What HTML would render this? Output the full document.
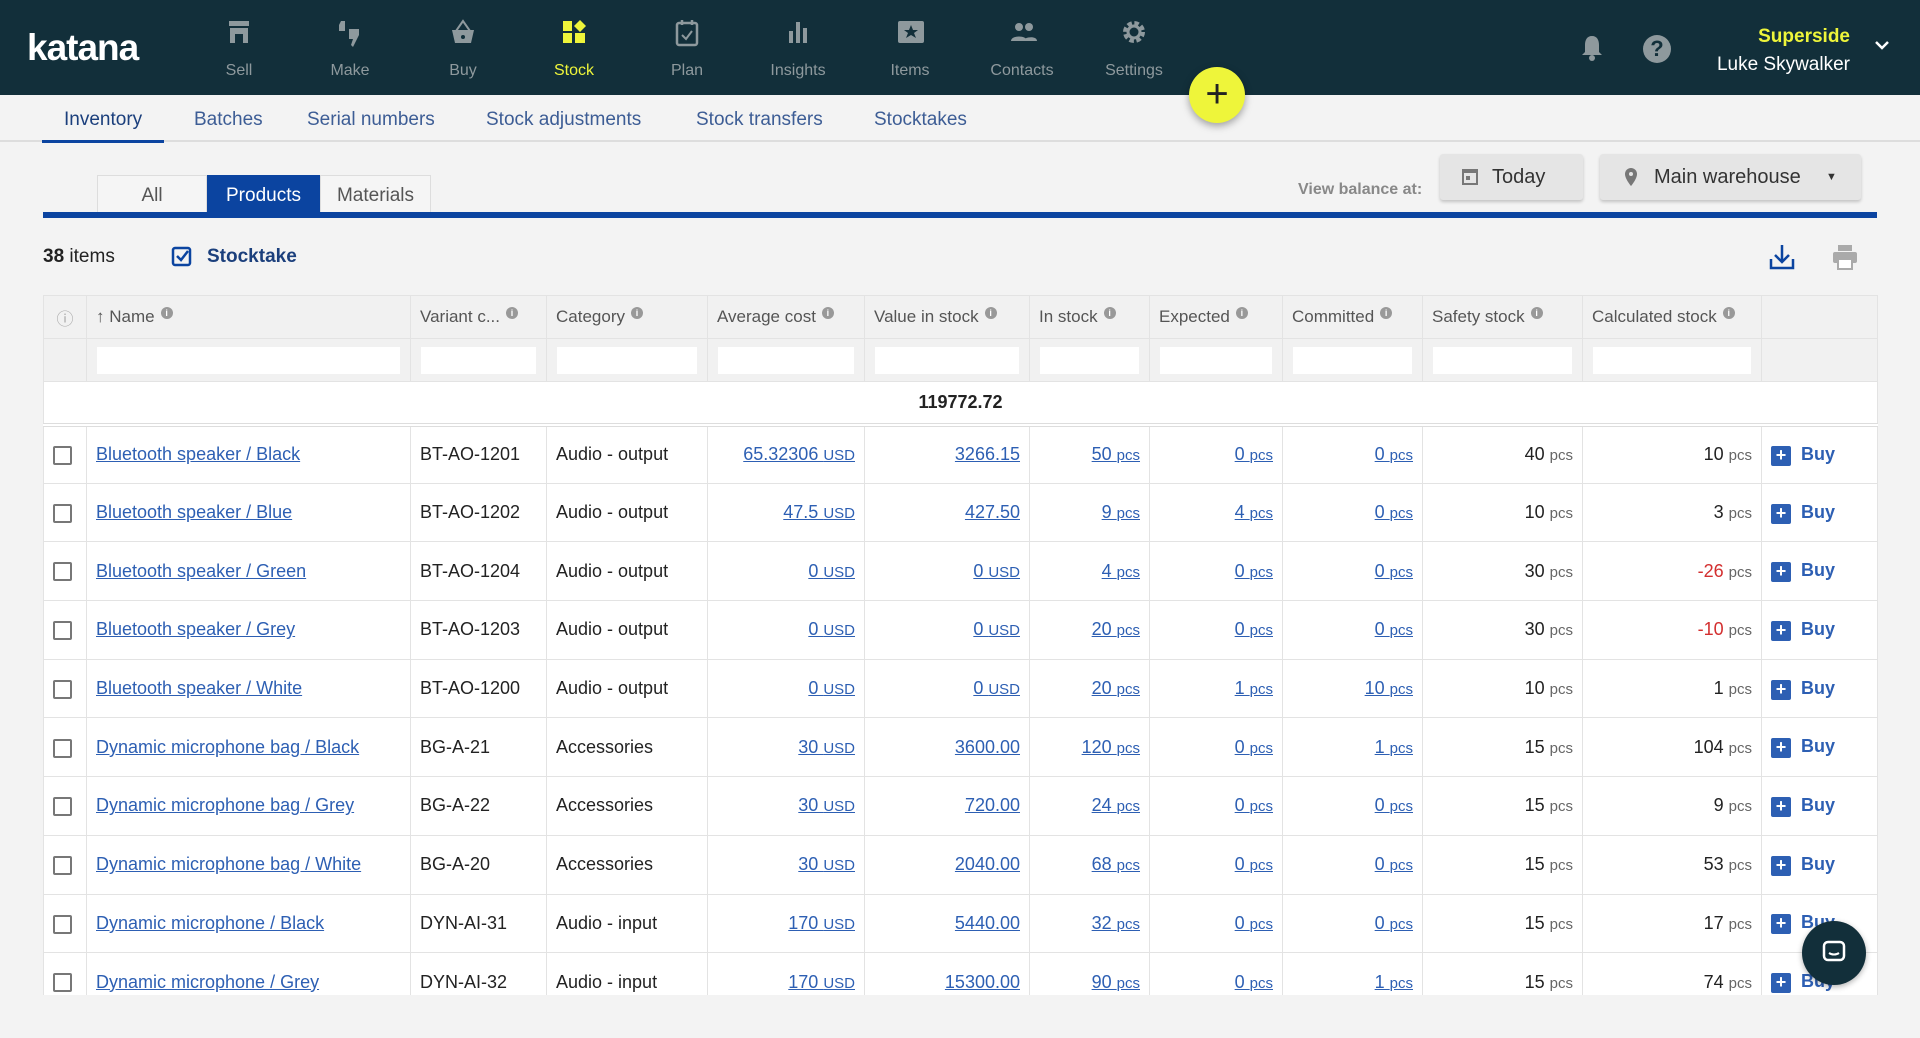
<!DOCTYPE html>
<html><head><meta charset="utf-8"><style>
*{box-sizing:border-box;margin:0;padding:0}
body{width:1920px;height:1038px;overflow:hidden;background:#f3f3f3;font-family:"Liberation Sans",sans-serif;position:relative;color:#222}
.hdr{position:absolute;left:0;top:0;width:1920px;height:95px;background:#122f3a}
.logo{position:absolute;left:27px;top:27px;color:#fff;font-size:37px;font-weight:bold;letter-spacing:-1px}
.nav{position:absolute;top:0;width:100px;height:95px;text-align:center;color:#8e999d;font-size:16px}
.nav svg{position:absolute;left:37px;top:19px}
.nav span{position:absolute;left:0;right:0;top:62px}
.nav.on{color:#eef53a}
.sub{position:absolute;left:0;top:95px;width:1920px;height:47px;border-bottom:2px solid #ddd}
.sub a{position:absolute;top:14px;font-size:19px;color:#3d5d95;text-decoration:none}
.sub a.on{color:#1b3f7c;border-bottom:3px solid #0b44a0;padding:0 22px 9px;margin-left:-22px}
.plus{position:absolute;left:1189px;top:67px;width:56px;height:56px;border-radius:50%;background:#eef53a;box-shadow:0 3px 8px rgba(0,0,0,.35);text-align:center;font-size:40px;line-height:54px;color:#222}
.tabs div{position:absolute;top:175px;height:37px;font-size:19px;text-align:center;line-height:39px;color:#555;background:#f5f5f5;border:1px solid #ddd;border-bottom:none}
.btn{position:absolute;top:154px;height:46px;background:#e5e5e5;border-radius:3px;box-shadow:0 2px 3px rgba(0,0,0,.2);font-size:20px;color:#333;line-height:46px}
table{position:absolute;left:43px;top:295px;border-collapse:collapse;table-layout:fixed;width:1834px;background:#fff;font-size:18px}
td,th{border:1px solid #e3e3e3;height:58.7px;padding:0 9px;white-space:nowrap;overflow:hidden}
th{background:#f1f1f1;font-weight:normal;color:#555;text-align:left;height:43px;font-size:17px}
tr.f td{background:#f1f1f1;height:43px;padding:0 10px}
tr.f td div{background:#fff;height:27px}
tr.t td{height:43px;text-align:center;font-weight:bold;font-size:18px;border-bottom:4px double #ddd}
td a{color:#2d5fb3;text-decoration:underline}
.r{text-align:right}
small{font-size:15px}
.g{color:#666}
.red{color:#d32f2f}
.cb{display:inline-block;width:19px;height:19px;border:2px solid #777;border-radius:2px;vertical-align:middle}
.i{display:inline-block;width:12px;height:12px;border-radius:50%;background:#999;color:#fff;font-size:9px;line-height:12px;text-align:center;vertical-align:top;margin-left:6px;font-weight:bold}
.buy{color:#2d5fb3;font-weight:bold}
.buy b{display:inline-block;width:20px;height:20px;background:#2d5fb3;color:#fff;border-radius:2px;font-size:18px;line-height:19px;text-align:center;margin-right:10px;vertical-align:-1px}
</style></head><body>
<div class="hdr">
<div class="logo">katana</div>
<div class="nav" style="left:189px"><svg width="26" height="26"><rect x="3" y="2" width="20" height="5" fill="#8e999d"/><rect x="4" y="9" width="18" height="15" fill="#8e999d"/><rect x="9" y="15" width="8" height="9" fill="#122f3a"/></svg><span>Sell</span></div>
<div class="nav" style="left:300px"><svg width="26" height="30"><path d="M4 2h4v10H2v-6zM12 10h10v6l-6 12-2-2 2-6h-4z" fill="#8e999d"/></svg><span>Make</span></div>
<div class="nav" style="left:413px"><svg width="26" height="26"><path d="M13 2l-7 10h14z" stroke="#8e999d" stroke-width="2" fill="none"/><path d="M2 11h22l-3 13H5z" fill="#8e999d"/><circle cx="13" cy="18" r="2" fill="#122f3a"/></svg><span>Buy</span></div>
<div class="nav on" style="left:524px"><svg width="26" height="26"><rect x="2" y="2" width="9" height="10" fill="#eef53a"/><path d="M19 1l6 6-6 6-6-6z" fill="#eef53a"/><rect x="2" y="14" width="9" height="10" fill="#eef53a"/><rect x="14" y="14" width="10" height="10" fill="#eef53a"/></svg><span>Stock</span></div>
<div class="nav" style="left:637px"><svg width="26" height="28"><rect x="3" y="4" width="20" height="22" rx="2" stroke="#8e999d" stroke-width="2.5" fill="none"/><path d="M8 1v5M18 1v5" stroke="#8e999d" stroke-width="2.5"/><path d="M8 16l4 4 6-8" stroke="#8e999d" stroke-width="2" fill="none"/></svg><span>Plan</span></div>
<div class="nav" style="left:748px"><svg width="26" height="26"><rect x="4" y="12" width="4" height="12" fill="#8e999d"/><rect x="11" y="3" width="4" height="21" fill="#8e999d"/><rect x="18" y="9" width="4" height="15" fill="#8e999d"/></svg><span>Insights</span></div>
<div class="nav" style="left:860px"><svg width="28" height="26"><rect x="1" y="2" width="26" height="22" rx="2" fill="#8e999d"/><path d="M14 6l2 5h5l-4 3 2 5-5-3-5 3 2-5-4-3h5z" fill="#122f3a"/></svg><span>Items</span></div>
<div class="nav" style="left:972px"><svg width="30" height="26"><circle cx="10" cy="8" r="4" fill="#8e999d"/><circle cx="20" cy="8" r="4" fill="#8e999d"/><path d="M2 22c0-6 16-6 16 0zM14 22c0-4 14-6 14 0z" fill="#8e999d"/></svg><span>Contacts</span></div>
<div class="nav" style="left:1084px"><svg width="26" height="26"><circle cx="13" cy="13" r="8" stroke="#8e999d" stroke-width="6" stroke-dasharray="4 2.3" fill="none"/><circle cx="13" cy="13" r="6" stroke="#8e999d" stroke-width="3" fill="none"/></svg><span>Settings</span></div>
<svg style="position:absolute;left:1580px;top:34px" width="24" height="28"><path d="M12 2c-5 0-7 4-7 9v7l-3 3h20l-3-3v-7c0-5-2-9-7-9z" fill="#8e999d"/><circle cx="12" cy="24" r="3" fill="#8e999d"/></svg>
<div style="position:absolute;left:1643px;top:35px;width:28px;height:28px;border-radius:50%;background:#8e999d;color:#122f3a;font-weight:bold;font-size:22px;text-align:center;line-height:28px">?</div>
<div style="position:absolute;right:70px;top:26px;color:#eef53a;font-weight:bold;font-size:19px">Superside</div>
<div style="position:absolute;right:70px;top:54px;color:#fff;font-size:19px">Luke Skywalker</div>
<svg style="position:absolute;left:1874px;top:40px" width="16" height="12"><path d="M2 2l6 6 6-6" stroke="#fff" stroke-width="2.5" fill="none"/></svg>
</div>
<div class="sub">
<a class="on" style="left:64px">Inventory</a><a style="left:194px">Batches</a><a style="left:307px">Serial numbers</a><a style="left:486px">Stock adjustments</a><a style="left:696px">Stock transfers</a><a style="left:874px">Stocktakes</a>
</div>
<div class="plus">+</div>
<div class="tabs"><div style="left:97px;width:110px">All</div><div style="left:207px;width:113px;background:#0b44a0;color:#fff;border-color:#0b44a0">Products</div><div style="left:320px;width:111px">Materials</div></div>
<div style="position:absolute;left:1298px;top:181px;font-size:16px;color:#888;font-weight:bold">View balance at:</div>
<div class="btn" style="left:1440px;width:143px"><svg style="position:absolute;left:22px;top:13px" width="16" height="18"><rect x="1" y="3" width="14" height="14" stroke="#777" stroke-width="2" fill="none"/><rect x="1" y="3" width="14" height="3" fill="#777"/><rect x="4" y="9" width="4" height="4" fill="#777"/></svg><span style="position:absolute;left:52px">Today</span></div>
<div class="btn" style="left:1600px;width:261px"><svg style="position:absolute;left:24px;top:13px" width="14" height="20"><path d="M7 1a6 6 0 0 0-6 6c0 5 6 12 6 12s6-7 6-12a6 6 0 0 0-6-6z" fill="#777"/><circle cx="7" cy="7" r="2" fill="#e5e5e5"/></svg><span style="position:absolute;left:54px">Main warehouse</span><span style="position:absolute;left:226px;font-size:11px">▼</span></div>
<div style="position:absolute;left:43px;top:212px;width:1834px;height:6px;background:#0b44a0"></div>
<div style="position:absolute;left:43px;top:246px;font-size:19px"><b>38</b> items</div>
<svg style="position:absolute;left:171px;top:245px" width="22" height="22"><rect x="2" y="3" width="17" height="17" rx="2" stroke="#0b44a0" stroke-width="2.5" fill="none"/><path d="M6 11l4 4 7-9" stroke="#0b44a0" stroke-width="2.5" fill="none"/></svg>
<div style="position:absolute;left:207px;top:246px;font-size:19px;color:#1b3f7c;font-weight:bold">Stocktake</div>
<svg style="position:absolute;left:1768px;top:243px" width="28" height="28"><path d="M14 2v16M7 12l7 7 7-7" stroke="#0b44a0" stroke-width="2.5" fill="none"/><path d="M3 16v9h22v-9" stroke="#0b44a0" stroke-width="2.5" fill="none"/></svg>
<svg style="position:absolute;left:1831px;top:243px" width="28" height="28"><rect x="7" y="2" width="14" height="6" fill="#aaa"/><rect x="2" y="9" width="24" height="11" rx="2" fill="#aaa"/><rect x="7" y="16" width="14" height="10" fill="#fff" stroke="#aaa" stroke-width="2"/></svg>
<table>
<colgroup><col style="width:43px"><col style="width:324px"><col style="width:136px"><col style="width:161px"><col style="width:157px"><col style="width:165px"><col style="width:120px"><col style="width:133px"><col style="width:140px"><col style="width:160px"><col style="width:179px"><col style="width:116px"></colgroup>
<tr><th style="text-align:center;color:#aaa">ⓘ</th><th>↑ Name<span class="i">i</span></th><th>Variant c...<span class="i">i</span></th><th>Category<span class="i">i</span></th><th>Average cost<span class="i">i</span></th><th>Value in stock<span class="i">i</span></th><th>In stock<span class="i">i</span></th><th>Expected<span class="i">i</span></th><th>Committed<span class="i">i</span></th><th>Safety stock<span class="i">i</span></th><th>Calculated stock<span class="i">i</span></th><th></th></tr>
<tr class="f"><td></td><td><div></div></td><td><div></div></td><td><div></div></td><td><div></div></td><td><div></div></td><td><div></div></td><td><div></div></td><td><div></div></td><td><div></div></td><td><div></div></td><td></td></tr>
<tr class="t"><td colspan="12">119772.72</td></tr>
<tr><td><span class="cb"></span></td><td><a>Bluetooth speaker / Black</a></td><td>BT-AO-1201</td><td>Audio - output</td><td class="r"><a>65.32306 <small>USD</small></a></td><td class="r"><a>3266.15</a></td><td class="r"><a>50 <small>pcs</small></a></td><td class="r"><a>0 <small>pcs</small></a></td><td class="r"><a>0 <small>pcs</small></a></td><td class="r">40 <small class="g">pcs</small></td><td class="r">10 <small class="g">pcs</small></td><td class="buy"><b>+</b>Buy</td></tr>
<tr><td><span class="cb"></span></td><td><a>Bluetooth speaker / Blue</a></td><td>BT-AO-1202</td><td>Audio - output</td><td class="r"><a>47.5 <small>USD</small></a></td><td class="r"><a>427.50</a></td><td class="r"><a>9 <small>pcs</small></a></td><td class="r"><a>4 <small>pcs</small></a></td><td class="r"><a>0 <small>pcs</small></a></td><td class="r">10 <small class="g">pcs</small></td><td class="r">3 <small class="g">pcs</small></td><td class="buy"><b>+</b>Buy</td></tr>
<tr><td><span class="cb"></span></td><td><a>Bluetooth speaker / Green</a></td><td>BT-AO-1204</td><td>Audio - output</td><td class="r"><a>0 <small>USD</small></a></td><td class="r"><a>0 <small>USD</small></a></td><td class="r"><a>4 <small>pcs</small></a></td><td class="r"><a>0 <small>pcs</small></a></td><td class="r"><a>0 <small>pcs</small></a></td><td class="r">30 <small class="g">pcs</small></td><td class="r"><span class="red">-26</span> <small class="g">pcs</small></td><td class="buy"><b>+</b>Buy</td></tr>
<tr><td><span class="cb"></span></td><td><a>Bluetooth speaker / Grey</a></td><td>BT-AO-1203</td><td>Audio - output</td><td class="r"><a>0 <small>USD</small></a></td><td class="r"><a>0 <small>USD</small></a></td><td class="r"><a>20 <small>pcs</small></a></td><td class="r"><a>0 <small>pcs</small></a></td><td class="r"><a>0 <small>pcs</small></a></td><td class="r">30 <small class="g">pcs</small></td><td class="r"><span class="red">-10</span> <small class="g">pcs</small></td><td class="buy"><b>+</b>Buy</td></tr>
<tr><td><span class="cb"></span></td><td><a>Bluetooth speaker / White</a></td><td>BT-AO-1200</td><td>Audio - output</td><td class="r"><a>0 <small>USD</small></a></td><td class="r"><a>0 <small>USD</small></a></td><td class="r"><a>20 <small>pcs</small></a></td><td class="r"><a>1 <small>pcs</small></a></td><td class="r"><a>10 <small>pcs</small></a></td><td class="r">10 <small class="g">pcs</small></td><td class="r">1 <small class="g">pcs</small></td><td class="buy"><b>+</b>Buy</td></tr>
<tr><td><span class="cb"></span></td><td><a>Dynamic microphone bag / Black</a></td><td>BG-A-21</td><td>Accessories</td><td class="r"><a>30 <small>USD</small></a></td><td class="r"><a>3600.00</a></td><td class="r"><a>120 <small>pcs</small></a></td><td class="r"><a>0 <small>pcs</small></a></td><td class="r"><a>1 <small>pcs</small></a></td><td class="r">15 <small class="g">pcs</small></td><td class="r">104 <small class="g">pcs</small></td><td class="buy"><b>+</b>Buy</td></tr>
<tr><td><span class="cb"></span></td><td><a>Dynamic microphone bag / Grey</a></td><td>BG-A-22</td><td>Accessories</td><td class="r"><a>30 <small>USD</small></a></td><td class="r"><a>720.00</a></td><td class="r"><a>24 <small>pcs</small></a></td><td class="r"><a>0 <small>pcs</small></a></td><td class="r"><a>0 <small>pcs</small></a></td><td class="r">15 <small class="g">pcs</small></td><td class="r">9 <small class="g">pcs</small></td><td class="buy"><b>+</b>Buy</td></tr>
<tr><td><span class="cb"></span></td><td><a>Dynamic microphone bag / White</a></td><td>BG-A-20</td><td>Accessories</td><td class="r"><a>30 <small>USD</small></a></td><td class="r"><a>2040.00</a></td><td class="r"><a>68 <small>pcs</small></a></td><td class="r"><a>0 <small>pcs</small></a></td><td class="r"><a>0 <small>pcs</small></a></td><td class="r">15 <small class="g">pcs</small></td><td class="r">53 <small class="g">pcs</small></td><td class="buy"><b>+</b>Buy</td></tr>
<tr><td><span class="cb"></span></td><td><a>Dynamic microphone / Black</a></td><td>DYN-AI-31</td><td>Audio - input</td><td class="r"><a>170 <small>USD</small></a></td><td class="r"><a>5440.00</a></td><td class="r"><a>32 <small>pcs</small></a></td><td class="r"><a>0 <small>pcs</small></a></td><td class="r"><a>0 <small>pcs</small></a></td><td class="r">15 <small class="g">pcs</small></td><td class="r">17 <small class="g">pcs</small></td><td class="buy"><b>+</b>Buy</td></tr>
<tr><td><span class="cb"></span></td><td><a>Dynamic microphone / Grey</a></td><td>DYN-AI-32</td><td>Audio - input</td><td class="r"><a>170 <small>USD</small></a></td><td class="r"><a>15300.00</a></td><td class="r"><a>90 <small>pcs</small></a></td><td class="r"><a>0 <small>pcs</small></a></td><td class="r"><a>1 <small>pcs</small></a></td><td class="r">15 <small class="g">pcs</small></td><td class="r">74 <small class="g">pcs</small></td><td class="buy"><b>+</b>Buy</td></tr>
</table>
<div style="position:absolute;left:0;top:995px;width:1920px;height:43px;background:#f3f3f3"></div>
<div style="position:absolute;left:1802px;top:921px;width:64px;height:64px;border-radius:50%;background:#122f3a;box-shadow:0 2px 6px rgba(0,0,0,.3)"><svg style="position:absolute;left:20px;top:19px" width="24" height="26"><rect x="2" y="2" width="20" height="18" rx="4" stroke="#fff" stroke-width="2.5" fill="none"/><path d="M7 13c3 2 7 2 10 0" stroke="#fff" stroke-width="2" fill="none"/></svg></div>
</body></html>
